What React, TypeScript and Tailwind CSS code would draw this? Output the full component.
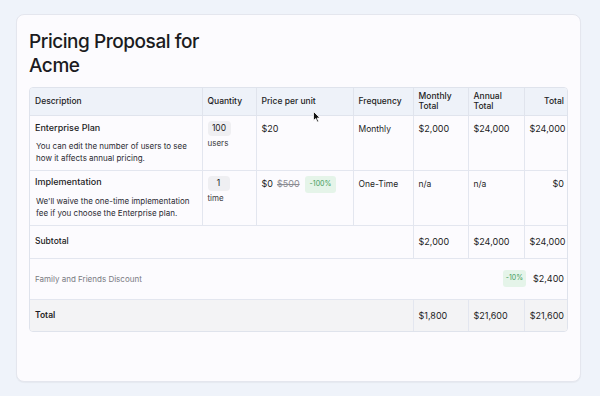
import React from "react";

const cell = "border-[#e3e6ef] px-[5px] align-top";

export default function App() {
  return (
    <div
      className="w-[600px] h-[396px] bg-[#eff3fa] pt-[14px] pl-[16px] relative"
      style={{ fontFamily: "Inter, 'Noto Sans', sans-serif" }}
    >
      <div className="w-[565px] h-[368px] bg-[#fcfbfe] rounded-[8px] border border-[#e4e6ee] px-[12px] pt-[15px] shadow-[0_1px_1px_rgba(0,0,0,0.04)]">
        <h1 className="w-[180px] text-[19px] leading-[24px] font-medium text-[#1b1b21] tracking-[-0.45px]">
          Pricing Proposal for Acme
        </h1>
        <div className="mt-[9px] w-[539px] border border-[#dfe3ec] rounded-[4px] overflow-hidden">
          <table className="w-[539px] border-collapse table-fixed text-[8.5px] text-[#1d1d24]">
            <colgroup>
              <col className="w-[172px]" />
              <col className="w-[54px]" />
              <col className="w-[97px]" />
              <col className="w-[60px]" />
              <col className="w-[55px]" />
              <col className="w-[56px]" />
              <col className="w-[45px]" />
            </colgroup>
            <thead>
              <tr className="bg-[#eef2f9] h-[27px] font-medium">
                <th className="border-b border-r border-[#e0e4ed] px-[5px] text-left font-medium">Description</th>
                <th className="border-b border-r border-[#e0e4ed] px-[5px] text-left font-medium">Quantity</th>
                <th className="border-b border-r border-[#e0e4ed] px-[5px] text-left font-medium">Price per unit</th>
                <th className="border-b border-r border-[#e0e4ed] px-[5px] text-left font-medium">Frequency</th>
                <th className="border-b border-r border-[#e0e4ed] px-[5px] text-left font-medium leading-[10px]">Monthly<br />Total</th>
                <th className="border-b border-r border-[#e0e4ed] px-[5px] text-left font-medium leading-[10px]">Annual<br />Total</th>
                <th className="border-b border-[#e0e4ed] px-[5px] text-right font-medium">Total</th>
              </tr>
            </thead>
            <tbody>
              <tr className="h-[55px]">
                <td className={`${cell} border-b border-r pt-[6px]`}>
                  <div className="text-[9px] font-medium leading-[12px]">Enterprise Plan</div>
                  <div className="mt-[6px] ml-[1px] text-[8px] leading-[12px] text-[#2a2a31]">
                    You can edit the number of users to see how it affects annual pricing.
                  </div>
                </td>
                <td className={`${cell} border-b border-r pt-[5px]`}>
                  <div className="inline-flex items-center justify-center w-[23px] h-[15px] rounded-[4px] bg-[#efeff2] text-[8.5px]">100</div>
                  <div className="mt-[1px] text-[8px] text-[#3a3a40]">users</div>
                </td>
                <td className={`${cell} border-b border-r pt-[6px] text-[9px]`}>$20</td>
                <td className={`${cell} border-b border-r pt-[7px]`}>Monthly</td>
                <td className={`${cell} border-b border-r pt-[6px] text-[9px]`}>$2,000</td>
                <td className={`${cell} border-b border-r pt-[6px] text-[9px]`}>$24,000</td>
                <td className={`${cell} border-b pt-[6px] text-right text-[9px]`}>$24,000</td>
              </tr>
              <tr className="h-[55px]">
                <td className={`${cell} border-b border-r pt-[5px]`}>
                  <div className="text-[9px] font-medium leading-[12px]">Implementation</div>
                  <div className="mt-[7px] ml-[1px] text-[8px] leading-[12px] text-[#2a2a31]">
                    We'll waive the one-time implementation fee if you choose the Enterprise plan.
                  </div>
                </td>
                <td className={`${cell} border-b border-r pt-[5px]`}>
                  <div className="inline-flex items-center justify-center w-[22px] h-[15px] rounded-[4px] bg-[#efeff2] text-[8.5px]">1</div>
                  <div className="mt-[1px] text-[8px] text-[#3a3a40]">time</div>
                </td>
                <td className={`${cell} border-b border-r pt-[5px]`}>
                  <div className="flex items-center gap-[4px]">
                    <span className="text-[9px]">$0</span>
                    <span className="text-[9px] text-[#8b8b92] line-through">$500</span>
                    <span className="ml-[1px] inline-flex items-center h-[17px] px-[5px] rounded-[3px] bg-[#e5f4e9] text-[#3e9b5a] text-[7px]">-100%</span>
                  </div>
                </td>
                <td className={`${cell} border-b border-r pt-[7px]`}>One-Time</td>
                <td className={`${cell} border-b border-r pt-[7px]`}>n/a</td>
                <td className={`${cell} border-b border-r pt-[7px]`}>n/a</td>
                <td className={`${cell} border-b pt-[6px] text-right text-[9px]`}>$0</td>
              </tr>
              <tr className="h-[33px]">
                <td colSpan={4} className="border-b border-r border-[#e3e6ef] px-[5px] align-middle font-medium">Subtotal</td>
                <td className="border-b border-r border-[#e3e6ef] px-[5px] align-middle text-[9px]">$2,000</td>
                <td className="border-b border-r border-[#e3e6ef] px-[5px] align-middle text-[9px]">$24,000</td>
                <td className="border-b border-[#e3e6ef] px-[5px] align-middle text-right text-[9px]">$24,000</td>
              </tr>
              <tr className="h-[41px]">
                <td colSpan={7} className="border-b border-[#e3e6ef] px-[5px] align-middle">
                  <div className="flex items-center justify-between">
                    <span className="text-[8px] text-[#7a7a82]">Family and Friends Discount</span>
                    <div className="flex items-center gap-[7px]">
                      <span className="inline-flex items-center justify-center h-[17px] w-[23px] rounded-[3px] bg-[#e5f4e9] text-[#3e9b5a] text-[7px]">-10%</span>
                      <span className="text-[9px]">$2,400</span>
                    </div>
                  </div>
                </td>
              </tr>
              <tr className="h-[32px] bg-[#f3f3f5]">
                <td colSpan={4} className="border-r border-[#e3e6ef] px-[5px] align-middle font-semibold">Total</td>
                <td className="border-r border-[#e3e6ef] px-[5px] align-middle text-[9px]">$1,800</td>
                <td className="border-r border-[#e3e6ef] px-[5px] align-middle text-[9px]">$21,600</td>
                <td className="px-[5px] align-middle text-right text-[9px]">$21,600</td>
              </tr>
            </tbody>
          </table>
        </div>
      </div>
      <svg className="absolute left-[313px] top-[111px]" width="8" height="12" viewBox="0 0 8 12">
        <path d="M0.5 0.5 L0.5 9.5 L2.7 7.5 L4.2 11 L5.6 10.4 L4.1 7 L7 7 Z" fill="#111" stroke="#fff" strokeWidth="0.8" />
      </svg>
    </div>
  );
}
